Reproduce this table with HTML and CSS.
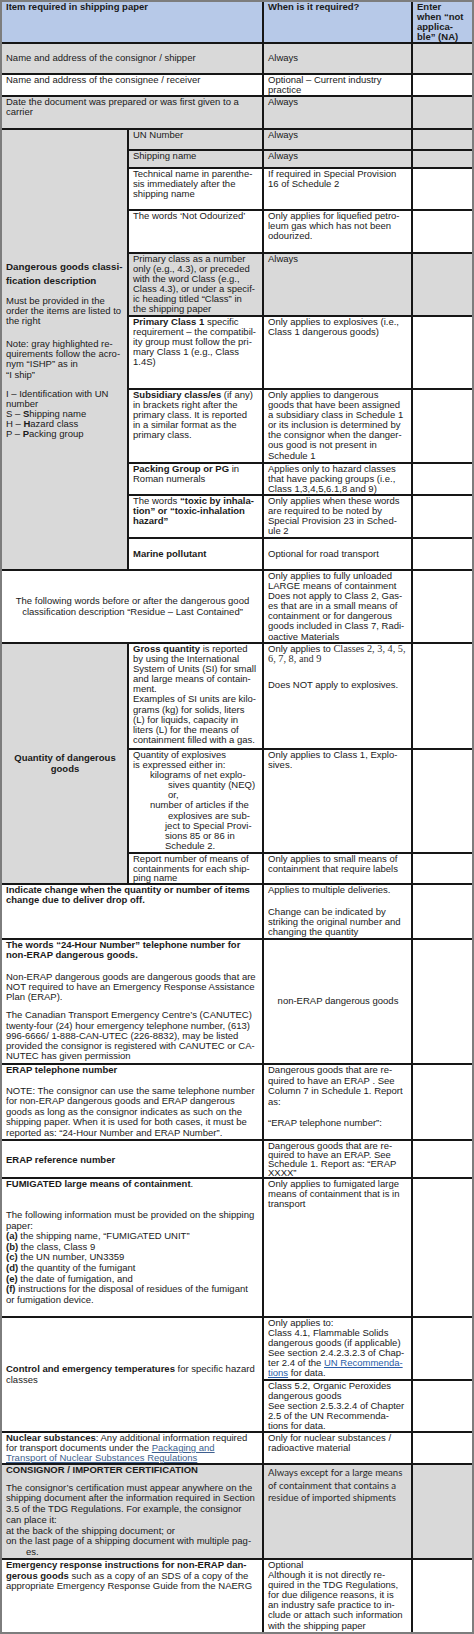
FILE: index.html
```html
<!DOCTYPE html>
<html lang="en">
<head>
<meta charset="utf-8">
<title>Shipping paper requirements</title>
<link rel="stylesheet" href="styles.css">
</head>
<body>
<div class="frame">
<table class="req">
  <colgroup>
    <col class="c1a"><col class="c1b"><col class="c2"><col class="c3">
  </colgroup>
  <tr class="h-head lh10">
    <th colspan="2">Item required in shipping paper</th>
    <th>When is it required?</th>
    <th>Enter<br>when “not<br>applica-<br>ble” (NA)</th>
  </tr>
  <tr class="h31 gray">
    <td colspan="2" class="mid">Name and address of the consignor / shipper</td>
    <td class="mid">Always</td>
    <td></td>
  </tr>
  <tr class="h22 lh10">
    <td colspan="2">Name and address of the consignee / receiver</td>
    <td>Optional – Current industry<br>practice</td>
    <td></td>
  </tr>
  <tr class="h33 gray">
    <td colspan="2">Date the document was prepared or was first given to a<br>carrier</td>
    <td>Always</td>
    <td></td>
  </tr>
  <tr class="h21">
    <td rowspan="10" class="mid gray dg">
      <div class="dg-title">Dangerous goods classi-<br>fication description</div>
      <p class="dg1">Must be provided in the<br>order the items are listed to<br>the right</p>
      <p class="dg2">Note: gray highlighted re-<br>quirements follow the acro-<br>nym “ISHP” as in<br>“I ship”</p>
      <p class="dg3">I – Identification with UN<br>number<br>S – <b>S</b>hipping name<br>H – <b>H</b>azard class<br>P – <b>P</b>acking group</p>
    </td>
    <td class="gray">UN Number</td>
    <td class="gray">Always</td>
    <td class="gray"></td>
  </tr>
  <tr class="h18 gray">
    <td>Shipping name</td>
    <td>Always</td>
    <td></td>
  </tr>
  <tr class="h42">
    <td>Technical name in parenthe-<br>sis immediately after the<br>shipping name</td>
    <td>If required in Special Provision<br>16 of Schedule 2</td>
    <td></td>
  </tr>
  <tr class="h43">
    <td>The words ‘Not Odourized’</td>
    <td>Only applies for liquefied petro-<br>leum gas which has not been<br>odourized.</td>
    <td></td>
  </tr>
  <tr class="h63 gray">
    <td>Primary class as a number<br>only (e.g., 4.3), or preceded<br>with the word Class (e.g.,<br>Class 4.3), or under a specif-<br>ic heading titled “Class” in<br>the shipping paper</td>
    <td>Always</td>
    <td></td>
  </tr>
  <tr class="h73">
    <td><b>Primary Class 1</b> specific<br>requirement – the compatibil-<br>ity group must follow the pri-<br>mary Class 1 (e.g., Class<br>1.4S)</td>
    <td>Only applies to explosives (i.e.,<br>Class 1 dangerous goods)</td>
    <td></td>
  </tr>
  <tr class="h74">
    <td><b>Subsidiary class/es</b> (if any)<br>in brackets right after the<br>primary class. It is reported<br>in a similar format as the<br>primary class.</td>
    <td>Only applies to dangerous<br>goods that have been assigned<br>a subsidiary class in Schedule 1<br>or its inclusion is determined by<br>the consignor when the danger-<br>ous good is not present in<br>Schedule 1</td>
    <td></td>
  </tr>
  <tr class="h32 lh10">
    <td><b>Packing Group or PG</b> in<br>Roman numerals</td>
    <td>Applies only to hazard classes<br>that have packing groups (i.e.,<br>Class 1,3,4,5,6.1,8 and 9)</td>
    <td></td>
  </tr>
  <tr class="h43">
    <td>The words <b>“toxic by inhala-<br>tion” or “toxic-inhalation<br>hazard”</b></td>
    <td>Only applies when these words<br>are required to be noted by<br>Special Provision 23 in Sched-<br>ule 2</td>
    <td></td>
  </tr>
  <tr class="h32">
    <td class="mid"><b>Marine pollutant</b></td>
    <td class="mid">Optional for road transport</td>
    <td></td>
  </tr>
  <tr class="h73">
    <td colspan="2" class="mid center">The following words before or after the dangerous good<br>classification description “Residue – Last Contained”</td>
    <td>Only applies to fully unloaded<br>LARGE means of containment<br>Does not apply to Class 2, Gas-<br>es that are in a small means of<br>containment or for dangerous<br>goods included in Class 7, Radi-<br>oactive Materials</td>
    <td></td>
  </tr>
  <tr class="h106">
    <td rowspan="3" class="mid center gray"><b>Quantity of dangerous<br>goods</b></td>
    <td><b>Gross quantity</b> is reported<br>by using the International<br>System of Units (SI) for small<br>and large means of contain-<br>ment.<br>Examples of SI units are kilo-<br>grams (kg) for solids, liters<br>(L) for liquids, capacity in<br>liters (L) for the means of<br>containment filled with a gas.</td>
    <td>Only applies to <span class="serif">Classes 2, 3, 4, 5,<br>6, 7, 8, and 9</span><p class="gq">Does NOT apply to explosives.</p></td>
    <td></td>
  </tr>
  <tr class="h104">
    <td>Quantity of explosives<br>is expressed either in:
      <div class="i1">kilograms of net explo-</div>
      <div class="i2">sives quantity (NEQ)</div>
      <div class="i2">or,</div>
      <div class="i1">number of articles if the</div>
      <div class="i2">explosives are sub-</div>
      <div class="i3">ject to Special Provi-</div>
      <div class="i3">sions 85 or 86 in</div>
      <div class="i3">Schedule 2.</div>
    </td>
    <td>Only applies to Class 1, Explo-<br>sives.</td>
    <td></td>
  </tr>
  <tr class="h31 lh96">
    <td>Report number of means of<br>containments for each ship-<br>ping name</td>
    <td>Only applies to small means of<br>containment that require labels</td>
    <td></td>
  </tr>
  <tr class="h55">
    <td colspan="2"><b>Indicate change when the quantity or number of items<br>change due to deliver drop off.</b></td>
    <td>Applies to multiple deliveries.<p class="ic">Change can be indicated by<br>striking the original number and<br>changing the quantity</p></td>
    <td></td>
  </tr>
  <tr class="h125">
    <td colspan="2"><b>The words “24-Hour Number” telephone number for<br>non-ERAP dangerous goods.</b>
      <p class="hr1">Non-ERAP dangerous goods are dangerous goods that are<br>NOT required to have an Emergency Response Assistance<br>Plan (ERAP).</p>
      <p class="hr2">The Canadian Transport Emergency Centre’s (CANUTEC)<br>twenty-four (24) hour emergency telephone number, (613)<br>996-6666/ 1-888-CAN-UTEC (226-8832), may be listed<br>provided the consignor is registered with CANUTEC or CA-<br>NUTEC has given permission</p>
    </td>
    <td class="mid center">non-ERAP dangerous goods</td>
    <td></td>
  </tr>
  <tr class="h76 lh106">
    <td colspan="2"><b>ERAP telephone number</b>
      <p class="et">NOTE: The consignor can use the same telephone number<br>for non-ERAP dangerous goods and ERAP dangerous<br>goods as long as the consignor indicates as such on the<br>shipping paper. When it is used for both cases, it must be<br>reported as: “24-Hour Number and ERAP Number”.</p>
    </td>
    <td>Dangerous goods that are re-<br>quired to have an ERAP . See<br>Column 7 in Schedule 1. Report<br>as:<p class="et2">“ERAP telephone number”:</p></td>
    <td></td>
  </tr>
  <tr class="h38 lh9">
    <td colspan="2" class="mid"><b>ERAP reference number</b></td>
    <td>Dangerous goods that are re-<br>quired to have an ERAP. See<br>Schedule 1. Report as: “ERAP<br>XXXX”</td>
    <td></td>
  </tr>
  <tr class="h139">
    <td colspan="2"><b>FUMIGATED large means of containment</b>.
      <p class="fu">The following information must be provided on the shipping<br>paper:<br><b>(a)</b> the shipping name, “FUMIGATED UNIT”<br><b>(b)</b> the class, Class 9<br><b>(c)</b> the UN number, UN3359<br><b>(d)</b> the quantity of the fumigant<br><b>(e)</b> the date of fumigation, and<br><b>(f)</b> instructions for the disposal of residues of the fumigant<br>or fumigation device.</p>
    </td>
    <td>Only applies to fumigated large<br>means of containment that is in<br>transport</td>
    <td></td>
  </tr>
  <tr class="h63">
    <td colspan="2" rowspan="2" class="mid"><b>Control and emergency temperatures</b> for specific hazard<br>classes</td>
    <td>Only applies to:<br>Class 4.1, Flammable Solids<br>dangerous goods (if applicable)<br>See section 2.4.2.3.2.3 of Chap-<br>ter 2.4 of the <a href="#" class="lnk">UN Recommenda-<br>tions</a> for data.</td>
    <td></td>
  </tr>
  <tr class="h52 lh10">
    <td>Class 5.2, Organic Peroxides<br>dangerous goods<br>See section 2.5.3.2.4 of Chapter<br>2.5 of the UN Recommenda-<br>tions for data.</td>
    <td></td>
  </tr>
  <tr class="h32 lh10">
    <td colspan="2"><b>Nuclear substances</b>: Any additional information required<br>for transport documents under the <a href="#" class="lnk2">Packaging and<br>Transport of Nuclear Substances Regulations</a></td>
    <td>Only for nuclear substances /<br>radioactive material</td>
    <td></td>
  </tr>
  <tr class="h95 gray">
    <td colspan="2" class="lh107"><b>CONSIGNOR / IMPORTER CERTIFICATION</b>
      <p class="ce">The consignor’s certification must appear anywhere on the<br>shipping document after the information required in Section<br>3.5 of the TDG Regulations. For example, the consignor<br>can place it:<br>at the back of the shipping document; or<br>on the last page of a shipping document with multiple pag-<br><span class="ind">es.</span></p>
    </td>
    <td class="cal">Always except for a large means<br>of containment that contains a<br>residue of imported shipments</td>
    <td></td>
  </tr>
  <tr class="h73">
    <td colspan="2" class="lh105"><b>Emergency response instructions for non-ERAP dan-<br>gerous goods</b> such as a copy of an SDS of a copy of the<br>appropriate Emergency Response Guide from the NAERG</td>
    <td>Optional<br>Although it is not directly re-<br>quired in the TDG Regulations,<br>for due diligence reasons, it is<br>an industry safe practice to in-<br>clude or attach such information<br>with the shipping paper</td>
    <td></td>
  </tr>
</table>
</div>
</body>
</html>
```
FILE: styles.css
```css
html, body {
  margin: 0;
  padding: 0;
  background: #ffffff;
}

.frame {
  width: 470px;
  border: 2px solid #7d7d7d;
}

.req {
  width: 470px;
  table-layout: fixed;
  border-collapse: collapse;
  border-style: hidden;
  font-family: "Liberation Sans", Arial, sans-serif;
  font-size: 9.5px;
  line-height: 10.1px;
  color: #1a1a1a;
}

.c1a { width: 126px; }
.c1b { width: 135px; }
.c2 { width: 149px; }
.c3 { width: 60px; }

.req th,
.req td {
  border: 2px solid #161616;
  padding: 0 3px 0 4px;
  vertical-align: top;
  text-align: left;
  white-space: nowrap;
}

.req th {
  background: #b7c9e8;
  font-weight: bold;
}

.gray > td,
td.gray {
  background: #d9d9d9;
}

.mid { vertical-align: middle !important; }
.center { text-align: center !important; }

.req p { margin: 0; }

/* line-height variants */
.lh9 { line-height: 9px; }
.lh96 { line-height: 9.6px; }
.lh10 { line-height: 10px; }
.lh105 { line-height: 10.5px; }
.lh106 { line-height: 10.6px; }
.lh107 { line-height: 10.7px; }

/* dangerous goods block */
.dg-title {
  font-weight: bold;
  font-size: 9.8px;
  line-height: 14px;
}
.req p.dg1 { margin-top: 8px; }
.req p.dg2 { margin-top: 13px; }
.req p.dg3 { margin-top: 9px; }

/* paragraph spacings */
.req p.gq { margin-top: 16px; }
.req p.ic { margin-top: 12px; }
.req p.hr1 { margin-top: 12px; }
.req p.hr2 { margin-top: 8px; }
.req p.et { margin-top: 10px; }
.req p.et2 { margin-top: 11px; }
.req p.fu { margin-top: 21px; line-height: 10.6px; }
.req p.ce { margin-top: 7px; }

.serif {
  font-family: "Liberation Serif", "Times New Roman", serif;
  font-size: 10.3px;
  color: #333;
}

.cal {
  font-family: Lato, "Open Sans", sans-serif;
  font-size: 9.6px;
  line-height: 12.5px;
  color: #2a2a2a;
  padding-top: 2px !important;
}

.i1 { padding-left: 17px; }
.i2 { padding-left: 35px; }
.i3 { padding-left: 32px; }
.ind { padding-left: 20px; }

.lnk { color: #2a5da8; text-decoration: underline; }
.lnk2 { color: #3e5f8f; text-decoration: underline; }

.h-head { height: 41px; }
.h18 { height: 18px; }
.h21 { height: 21px; }
.h22 { height: 22px; }
.h31 { height: 31px; }
.h32 { height: 32px; }
.h33 { height: 33px; }
.h38 { height: 38px; }
.h42 { height: 42px; }
.h43 { height: 43px; }
.h52 { height: 52px; }
.h55 { height: 55px; }
.h63 { height: 63px; }
.h73 { height: 73px; }
.h74 { height: 74px; }
.h76 { height: 76px; }
.h95 { height: 95px; }
.h104 { height: 104px; }
.h106 { height: 106px; }
.h125 { height: 125px; }
.h139 { height: 139px; }
```
